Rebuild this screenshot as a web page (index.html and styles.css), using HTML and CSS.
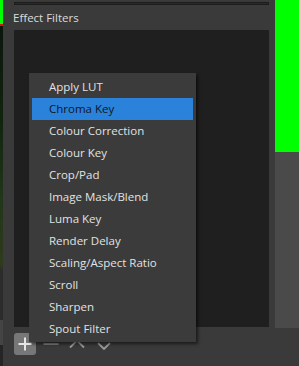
FILE: index.html
```html
<!DOCTYPE html>
<html>
<head>
<meta charset="utf-8">
<link rel="stylesheet" href="styles.css">
</head>
<body>
<div class="screen">
  <div class="strip"></div>
  <div class="panel">
    <div class="topbox"></div>
    <div class="label">Effect Filters</div>
    <div class="list"></div>
    <div class="toolbar">
      <div class="addbtn">
        <svg width="22" height="22" viewBox="0 0 22 22"><path d="M4.5 11H17.5M11 4.5V17.5" stroke="#e6e6e6" stroke-width="2" fill="none"/></svg>
      </div>
      <svg class="ic-minus" width="16" height="22" viewBox="0 0 16 22"><path d="M0.5 11H15.5" stroke="#8c8c8c" stroke-width="1.6" fill="none"/></svg>
      <svg class="ic-up" width="16" height="22" viewBox="0 0 16 22"><path d="M1 14.5L8 7.5L15 14.5" stroke="#9a9a9a" stroke-width="1.8" fill="none"/></svg>
      <svg class="ic-down" width="14" height="22" viewBox="0 0 14 22"><path d="M1 10L7 16L13 10" stroke="#9a9a9a" stroke-width="1.8" fill="none"/></svg>
    </div>
    <div class="menu">
      <div class="item">Apply LUT</div>
      <div class="item active">Chroma Key</div>
      <div class="item">Colour Correction</div>
      <div class="item">Colour Key</div>
      <div class="item">Crop/Pad</div>
      <div class="item">Image Mask/Blend</div>
      <div class="item">Luma Key</div>
      <div class="item">Render Delay</div>
      <div class="item">Scaling/Aspect Ratio</div>
      <div class="item">Scroll</div>
      <div class="item">Sharpen</div>
      <div class="item">Spout Filter</div>
    </div>
  </div>
  <div class="side">
    <div class="green"></div>
    <div class="grey"></div>
  </div>
</div>
</body>
</html>
```

FILE: styles.css
```css
html, body {
  margin: 0;
  padding: 0;
  background: #3a3a3a;
}
.screen {
  width: 299px;
  height: 366px;
  display: flex;
  overflow: hidden;
  font-family: "Open Sans", "Noto Sans", sans-serif;
}
.strip {
  width: 3px;
  flex: none;
  background: linear-gradient(to bottom,
    #00ff00 0, #00ff00 24px,
    #d81010 24px, #d81010 26px,
    #0b160c 26px, #12240f 120px, #22361a 200px, #2f3b1c 265px,
    #2c2c2c 270px, #2c2c2c 320px,
    #444444 320px, #444444 345px,
    #252525 345px, #252525 366px);
}
.panel {
  position: relative;
  width: 272px;
  flex: none;
  background: #3a3a3a;
  display: flex;
  flex-direction: column;
}
.topbox {
  margin: 2px 0 0 11px;
  width: 253px;
  height: 1px;
  border: 1px solid #1c1c1c;
  background: #2a2a2a;
}
.label {
  margin: 4px 0 0 10px;
  height: 17px;
  line-height: 17px;
  font-size: 11.5px;
  color: #dadada;
}
.list {
  margin: 4px 0 0 11px;
  width: 255px;
  height: 297px;
  background: #1f1f1f;
}
.toolbar {
  margin: 6px 0 0 11px;
  display: flex;
  align-items: flex-start;
}
.addbtn {
  width: 22px;
  height: 22px;
  border-radius: 3px;
  background: #777777;
}
.addbtn svg { display: block; }
.ic-minus { margin-left: 7px; }
.ic-up { margin-left: 10px; }
.ic-down { margin-left: 12px; }
.menu {
  position: absolute;
  left: 26px;
  top: 73px;
  width: 161px;
  padding: 3px 3px 2px 3px;
  background: #3b3b3b;
  box-shadow: 2px 2px 3px rgba(0, 0, 0, 0.55);
  z-index: 2;
}
.item {
  height: 22px;
  line-height: 22px;
  padding-left: 17px;
  font-size: 11.5px;
  color: #e2e2e2;
  white-space: nowrap;
}
.item.active {
  background: #2a82da;
  color: #0d1726;
}
.side {
  width: 24px;
  flex: none;
  display: flex;
  flex-direction: column;
}
.green {
  height: 152px;
  background: #00ff00;
}
.grey {
  height: 176px;
  background: #4a4a4a;
}
```
